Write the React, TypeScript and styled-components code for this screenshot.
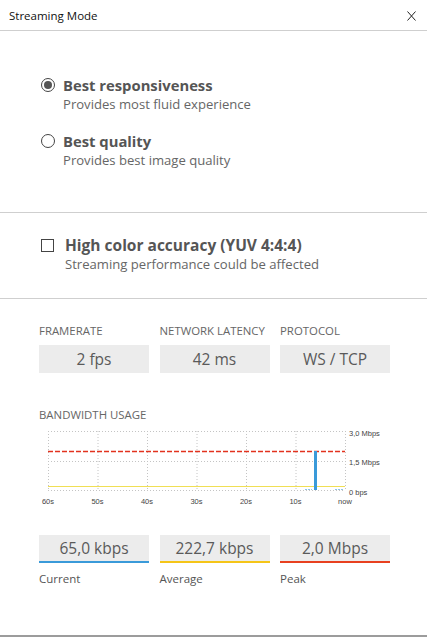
import React from "react";
import styled, { createGlobalStyle } from "styled-components";

const GlobalStyle = createGlobalStyle`
  html, body {
    margin: 0;
    padding: 0;
    background: #fff;
    font-family: "Open Sans", "Noto Sans", sans-serif;
  }
`;

const Window = styled.div`
  width: 427px;
  height: 637px;
  box-sizing: border-box;
  border-bottom: 2px solid #9c9c9c;
  display: flex;
  flex-direction: column;
  background: #fff;
`;

const TitleBar = styled.div`
  height: 31px;
  box-sizing: border-box;
  border-bottom: 1px solid #cfcfcf;
  padding: 0 11px 0 9px;
  display: flex;
  align-items: center;
  justify-content: space-between;
  font-size: 11.5px;
  color: #111;
`;

const CloseBtn = styled.svg`
  width: 9px;
  height: 10px;
  margin-top: 1px;
`;

const Section = styled.div<{ $pt: number; $pb: number; $divider?: boolean }>`
  padding: ${(p) => p.$pt}px 0 ${(p) => p.$pb}px 41px;
  border-bottom: ${(p) => (p.$divider ? "1px solid #cfcfcf" : "none")};
  display: flex;
  flex-direction: column;
`;

const OptionList = styled.div`
  display: flex;
  flex-direction: column;
  gap: 18px;
`;

const Option = styled.div<{ $gap: number }>`
  display: flex;
  align-items: flex-start;
  gap: ${(p) => p.$gap}px;
`;

const Radio = styled.span<{ $checked?: boolean }>`
  width: 14px;
  height: 14px;
  box-sizing: border-box;
  border: 1px solid #444;
  border-radius: 50%;
  margin-top: 3px;
  display: flex;
  align-items: center;
  justify-content: center;
  flex-shrink: 0;
  &::after {
    content: "";
    width: 8px;
    height: 8px;
    border-radius: 50%;
    background: ${(p) => (p.$checked ? "#555" : "transparent")};
  }
`;

const Checkbox = styled.span`
  width: 13px;
  height: 13px;
  box-sizing: border-box;
  border: 1px solid #444;
  margin-top: 4px;
  flex-shrink: 0;
`;

const OptionText = styled.div`
  display: flex;
  flex-direction: column;
`;

const OptionTitle = styled.div<{ $size?: number }>`
  font-size: ${(p) => p.$size ?? 14.8}px;
  font-weight: 700;
  line-height: 20px;
  color: #555;
`;

const OptionSub = styled.div`
  font-size: 13.1px;
  line-height: 18px;
  color: #666;
`;

const StatsArea = styled.div`
  padding: 24px 37px 0 39px;
  display: flex;
  flex-direction: column;
`;

const StatGrid = styled.div`
  display: grid;
  grid-template-columns: repeat(3, 110px);
  column-gap: 10.5px;
`;

const StatCell = styled.div`
  display: flex;
  flex-direction: column;
`;

const StatLabel = styled.div`
  font-size: 11.4px;
  line-height: 16px;
  color: #666;
  text-transform: uppercase;
  white-space: nowrap;
  margin-bottom: 6px;
`;

const ValueBox = styled.div<{ $accent?: string }>`
  height: ${(p) => (p.$accent ? "26px" : "28px")};
  background: #ececec;
  border-bottom: ${(p) => (p.$accent ? `2px solid ${p.$accent}` : "none")};
  display: flex;
  align-items: center;
  justify-content: center;
  font-size: 15.5px;
  color: #5a5a5a;
`;

const SectionLabel = styled.div`
  font-size: 11.4px;
  line-height: 16px;
  color: #666;
  margin-top: 34px;
`;

const Chart = styled.svg`
  display: block;
  width: 380px;
  height: 82px;
  margin-top: 2px;
`;

const Caption = styled.div`
  font-size: 11.5px;
  line-height: 16px;
  color: #555;
  margin-top: 8px;
`;

const BottomGrid = styled(StatGrid)`
  margin-top: 28px;
`;

const gridX = [9, 58.5, 108, 157.5, 207, 256.5, 306];
const xLabels = ["60s", "50s", "40s", "30s", "20s", "10s", "now"];

const BandwidthChart: React.FC = () => (
  <Chart viewBox="0 0 380 82">
    {gridX.map((x) => (
      <line key={x} x1={x + 0.5} y1={6} x2={x + 0.5} y2={65} stroke="#c4c4c4" strokeWidth={1} strokeDasharray="1 2" />
    ))}
    {[6, 36, 65].map((y) => (
      <line key={y} x1={9} y1={y + 0.5} x2={306} y2={y + 0.5} stroke="#c4c4c4" strokeWidth={1} strokeDasharray="1 2" />
    ))}
    <line x1={9} y1={26.5} x2={306} y2={26.5} stroke="#e2321e" strokeWidth={1.3} strokeDasharray="5 2" />
    <line x1={9} y1={61.5} x2={306} y2={61.5} stroke="#f0df55" strokeWidth={1.2} />
    <rect x={275} y={26} width={3} height={39} fill="#3a9ad9" />
    <line x1={266} y1={64.5} x2={273} y2={64.5} stroke="#8fc4e8" strokeWidth={1} strokeDasharray="2 1" />
    <line x1={296} y1={64.5} x2={304} y2={64.5} stroke="#8fc4e8" strokeWidth={1} strokeDasharray="2 1" />
    <g fontFamily="'Liberation Sans', Arial, sans-serif" fontSize="7.5" fill="#444">
      <text x={310} y={11}>3,0 Mbps</text>
      <text x={310} y={40}>1,5 Mbps</text>
      <text x={310} y={70}>0 bps</text>
      {xLabels.map((l, i) => (
        <text key={l} x={gridX[i]} y={79} textAnchor="middle">
          {l}
        </text>
      ))}
    </g>
  </Chart>
);

const stats = [
  { label: "Framerate", value: "2 fps" },
  { label: "Network latency", value: "42 ms" },
  { label: "Protocol", value: "WS / TCP" },
];

const bandwidth = [
  { label: "Current", value: "65,0 kbps", color: "#3a9ad9" },
  { label: "Average", value: "222,7 kbps", color: "#f5c518" },
  { label: "Peak", value: "2,0 Mbps", color: "#e8401f" },
];

const App: React.FC = () => {
  return (
    <>
      <GlobalStyle />
      <Window>
        <TitleBar>
          <span>Streaming Mode</span>
          <CloseBtn viewBox="0 0 9 10">
            <path d="M0.5 0.5 L8.5 9.5 M8.5 0.5 L0.5 9.5" stroke="#222" strokeWidth={1} fill="none" />
          </CloseBtn>
        </TitleBar>

        <Section $pt={44} $pb={43} $divider>
          <OptionList>
            <Option $gap={8}>
              <Radio $checked />
              <OptionText>
                <OptionTitle>Best responsiveness</OptionTitle>
                <OptionSub>Provides most fluid experience</OptionSub>
              </OptionText>
            </Option>
            <Option $gap={8}>
              <Radio />
              <OptionText>
                <OptionTitle>Best quality</OptionTitle>
                <OptionSub>Provides best image quality</OptionSub>
              </OptionText>
            </Option>
          </OptionList>
        </Section>

        <Section $pt={22} $pb={25} $divider>
          <Option $gap={11}>
            <Checkbox />
            <OptionText>
              <OptionTitle $size={15.5}>High color accuracy (YUV 4:4:4)</OptionTitle>
              <OptionSub>Streaming performance could be affected</OptionSub>
            </OptionText>
          </Option>
        </Section>

        <StatsArea>
          <StatGrid>
            {stats.map((s) => (
              <StatCell key={s.label}>
                <StatLabel>{s.label}</StatLabel>
                <ValueBox>{s.value}</ValueBox>
              </StatCell>
            ))}
          </StatGrid>

          <SectionLabel>BANDWIDTH USAGE</SectionLabel>
          <BandwidthChart />

          <BottomGrid>
            {bandwidth.map((b) => (
              <StatCell key={b.label}>
                <ValueBox $accent={b.color}>{b.value}</ValueBox>
                <Caption>{b.label}</Caption>
              </StatCell>
            ))}
          </BottomGrid>
        </StatsArea>
      </Window>
    </>
  );
};

export default App;
